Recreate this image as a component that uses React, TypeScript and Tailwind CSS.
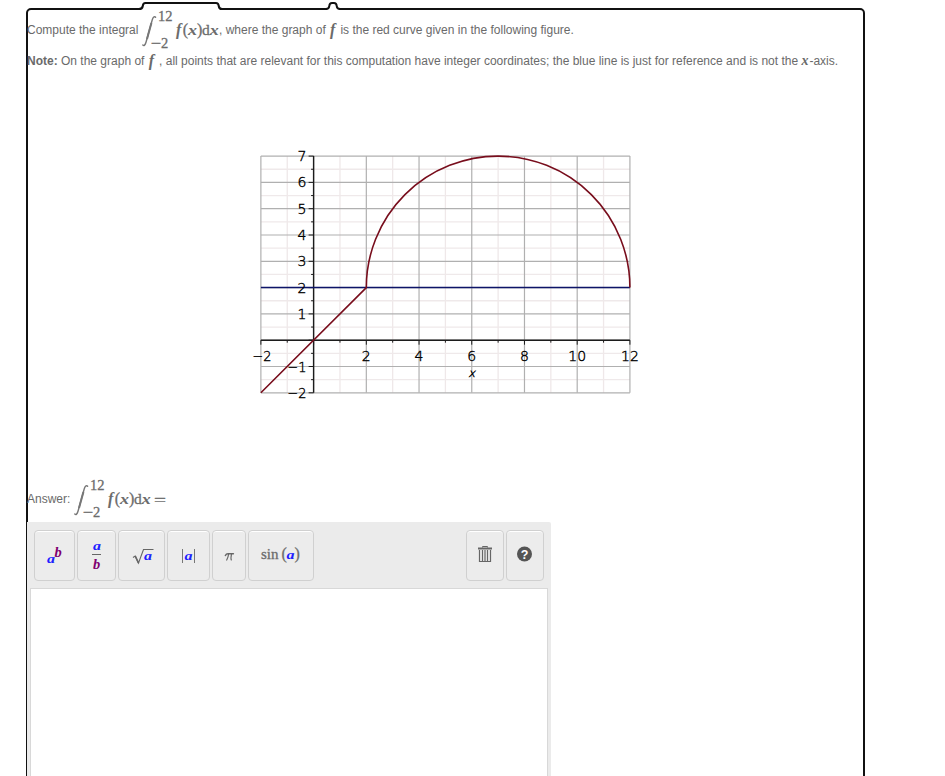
import type { ReactNode } from 'react'

const UNIT_X = 26.36
const UNIT_Y = 26.3

// the plot origin inside the svg
const px = (x: number) => 73.6 + x * UNIT_X
const py = (y: number) => 195.2 + y * -UNIT_Y

const xLabels = [-2, 2, 4, 6, 8, 10, 12]
const yLabels = [-2, -1, 1, 2, 3, 4, 5, 6, 7]

const range = (from: number, to: number, step: number) =>
  Array.from({ length: Math.round((to - from) / step) + 1 }, (_, i) => from + i * step)

const label = (n: number) => String(n).replace('-', '−')

function Plot() {
  return (
    <svg width="400" height="260" className="ml-[213px] block" fill="none">
      {range(-1, 11, 2).map((x) => (
        <path key={x} d={`M${px(x)} ${py(7)}V${py(-2)}`} stroke="#efe8e9" strokeWidth="1.3" />
      ))}
      {range(-1.5, 6.5, 1).map((y) => (
        <path key={y} d={`M${px(-2)} ${py(y)}H${px(12)}`} stroke="#efe9ea" strokeWidth="1.3" />
      ))}
      {range(-2, 12, 2).map((x) => (
        <path key={x} d={`M${px(x)} ${py(7)}V${py(-2)}`} stroke="#b0b0b0" strokeWidth="1.2" />
      ))}
      {range(-2, 7, 1).map((y) => (
        <path key={y} d={`M${px(-2)} ${py(y)}H${px(12)}`} stroke="#b0b0b0" strokeWidth="1.2" />
      ))}

      <path d={`M${px(-2)} ${py(0)}H${px(12)}M${px(0)} ${py(7)}V${py(-2)}`} stroke="#1c1c1c" strokeWidth="1.4" />
      {range(-2, 12, 1).map((x) => (
        <path key={x} d={`M${px(x)} ${py(0)}v${x % 2 === 0 ? 4.5 : 2.5}`} stroke="#1c1c1c" />
      ))}
      {range(-2, 7, 0.5).map((y) => (
        <path key={y} d={`M${px(0)} ${py(y)}h${y % 1 === 0 ? -5 : -2.5}`} stroke="#1c1c1c" />
      ))}

      <path d={`M${px(-2)} ${py(2)}H${px(12)}`} stroke="#0d1468" strokeWidth="1.5" />
      <path
        d={`M${px(-2)} ${py(-2)}L${px(2)} ${py(2)}A${5 * UNIT_X} ${5 * UNIT_Y} 0 0 1 ${px(12)} ${py(2)}`}
        stroke="#780d1c"
        strokeWidth="1.6"
      />

      <g fill="#000" stroke="#000" strokeWidth="0.4" fontFamily="DejaVu Sans Light, DejaVu Sans, sans-serif" fontWeight="200" fontSize="14" textAnchor="middle">
        {xLabels.map((x) => (
          <text
            key={x}
            x={px(x) + (x < 0 ? 1 : 0)}
            y="216"
            textLength={x < 0 ? 19 : undefined}
            lengthAdjust="spacingAndGlyphs"
          >
            {label(x)}
          </text>
        ))}
        <text x={px(6)} y="232" fontSize="11.5" fontStyle="italic">x</text>
      </g>
      <g fill="#000" stroke="#000" strokeWidth="0.4" fontFamily="DejaVu Sans Light, DejaVu Sans, sans-serif" fontWeight="200" fontSize="14" textAnchor="end">
        {yLabels.map((y) => (
          <text
            key={y}
            x="66.5"
            y={py(y) + 5}
            textLength={y < 0 ? 19 : undefined}
            lengthAdjust="spacingAndGlyphs"
          >
            {label(y)}
          </text>
        ))}
      </g>
    </svg>
  )
}

function Integral({ equals = false }: { equals?: boolean }) {
  return (
    <svg
      width={equals ? 100 : 80}
      height="44"
      className="block shrink-0"
      fill="#6c6c6c"
      fontFamily="Liberation Serif, serif"
      fontSize="16"
    >
      <path
        d="M16.6 9.3C15.4 7.8 14 9.3 13.2 12L7 34.3C6.2 37 5 38.2 3.8 37"
        fill="none"
        stroke="#777"
        strokeWidth="1.4"
        strokeLinecap="round"
      />
      <path d="M12.4 15L8 31" stroke="#777" strokeWidth="2" />
      <g stroke="#6c6c6c" strokeWidth="0.3">
        <text x="19" y="13" fontSize="14.5">12</text>
        <text x="11.5" y="40" fontSize="14.5" textLength="10.5" lengthAdjust="spacingAndGlyphs">−</text>
        <text x="22" y="40" fontSize="14.5">2</text>
        <text x="37" y="26.5" fontStyle="italic" fontWeight="bold" fontSize="16" strokeWidth="0">f</text>
        <text x="43.8" y="26.8">(</text>
        <text x="49" y="27" fontStyle="italic" fontWeight="bold" fontSize="14" textLength="9" lengthAdjust="spacingAndGlyphs" strokeWidth="0">x</text>
        <text x="58" y="26.8">)</text>
        <text x="63" y="27" fontSize="15.5">d</text>
        <text x="70.8" y="27" fontStyle="italic" fontWeight="bold" fontSize="14" textLength="9" lengthAdjust="spacingAndGlyphs" strokeWidth="0">x</text>
        {equals && <text x="83" y="27.5" fontSize="15" textLength="12" lengthAdjust="spacingAndGlyphs">=</text>}
      </g>
    </svg>
  )
}

function ToolButton({ className, children }: { className: string; children: ReactNode }) {
  return (
    <button
      className={`flex h-[51px] shrink-0 items-center justify-center rounded-[4px] border border-[#d0d0d0] bg-[#ececec] shadow-[inset_0_1px_0_#fff] ${className}`}
    >
      {children}
    </button>
  )
}

const A = ({ x, y }: { x: number; y: number }) => (
  <text x={x} y={y} fill="#2020ff" fontSize="13.5" textLength="8" lengthAdjust="spacingAndGlyphs">a</text>
)

function Toolbar() {
  return (
    <div className="flex gap-[2px] pt-2 pr-[7px] pl-[7px] text-[#666]">
      <ToolButton className="w-[41px]">
        <svg width="39" height="49" fontFamily="Liberation Serif, serif" fontWeight="bold" fontStyle="italic" fontSize="14.5">
          <A x={12} y={32} />
          <text x="19.5" y="26" fill="#800070">b</text>
        </svg>
      </ToolButton>
      <ToolButton className="w-[39px]">
        <svg width="37" height="49" fontFamily="Liberation Serif, serif" fontWeight="bold" fontStyle="italic" fontSize="14.5">
          <A x={15} y={18.5} />
          <path d="M14 23.5h9" stroke="#666" />
          <text x="15" y="38" fill="#800070">b</text>
        </svg>
      </ToolButton>
      <ToolButton className="w-[47px]">
        <svg width="45" height="49" fontFamily="Liberation Serif, serif" fontWeight="bold" fontStyle="italic" fontSize="14.5">
          <path d="M14 26.5L16.2 25L19.5 32L24.5 18.5H34.5" fill="none" stroke="#666" strokeWidth="1.1" />
          <path d="M16.2 25L19.5 32" stroke="#666" strokeWidth="1.7" />
          <A x={25} y={28.5} />
        </svg>
      </ToolButton>
      <ToolButton className="w-[43px]">
        <svg width="41" height="49" fontFamily="Liberation Serif, serif" fontWeight="bold" fontStyle="italic" fontSize="14.5">
          <path d="M14.5 18v14M26.5 18v14" stroke="#777" />
          <A x={16.5} y={28.5} />
        </svg>
      </ToolButton>
      <ToolButton className="w-[34px]">
        <svg width="32" height="49" fill="none" stroke="#666" strokeLinecap="round">
          <path d="M12.4 24.5Q13.2 22.8 15 22.8H20.4" strokeWidth="1.5" />
          <path d="M15.6 23Q15.2 26.5 13.7 29M18.5 23Q17.6 27.5 18.3 29" strokeWidth="1.2" />
        </svg>
      </ToolButton>
      <ToolButton className="w-[66px]">
        <svg width="64" height="49" fontFamily="Liberation Serif, serif" fontSize="14.5">
          <g fill="#6c6c6c" stroke="#6c6c6c" strokeWidth="0.3">
            <text x="12" y="28" textLength="17.5" lengthAdjust="spacingAndGlyphs">sin</text>
            <text x="32.5" y="28" fontSize="16">(</text>
            <text x="45.5" y="28" fontSize="16">)</text>
          </g>
          <g fontWeight="bold" fontStyle="italic">
            <A x={37.5} y={28} />
          </g>
        </svg>
      </ToolButton>
      <div className="grow" />
      <ToolButton className="w-[38px]">
        <svg width="36" height="49" fill="none" stroke="#666">
          <path d="M11 17.5h14" strokeWidth="2" />
          <path d="M15.5 16.5V15.5H20.5V16.5" />
          <path d="M12.5 19v11.5h11V19M15.5 19v11M18 19v11M20.5 19v11" strokeWidth="1.2" />
        </svg>
      </ToolButton>
      <ToolButton className="w-[38px]">
        <svg width="36" height="49">
          <circle cx="17.5" cy="23" r="7.5" fill="#555" />
          <text x="17.5" y="27.5" fill="#fff" fontFamily="Liberation Sans, sans-serif" fontSize="12.5" fontWeight="bold" textAnchor="middle">?</text>
        </svg>
      </ToolButton>
    </div>
  )
}

const F = () => (
  <span className="w-[8px] pl-px font-['Liberation_Serif',serif] text-[16px] leading-none font-bold italic">f</span>
)

export default function App() {
  return (
    <div className="h-[776px] w-[945px] overflow-hidden bg-white pt-2 pl-[26px] font-['Liberation_Sans',Arial,sans-serif] text-[12px] text-[#6a6a6a]">
      <div className="relative h-[800px] w-[839px] rounded-t-[5px] border-2 border-[#111]">
        {/* folder tabs on the top edge */}
        <svg width="220" height="10" className="absolute -top-[8px] left-[111px]" fill="none">
          <path d="M2 7H81M188 7H200" stroke="#fff" strokeWidth="2" />
          <path d="M0 7Q3.4 7 3.8 4Q4 1 6.5 1H77Q79.5 1 79.7 4Q80.1 7 83 7" stroke="#111" strokeWidth="2" />
          <path d="M187 7Q190 7 190.3 4Q190.5 1 193 1H195Q197.5 1 197.7 4Q198 7 201 7" stroke="#111" strokeWidth="2" />
        </svg>

        <div className="-ml-px">
          <div className="flex h-[40px] items-center whitespace-pre">
            <span className="w-[112px] shrink-0">Compute the integral</span>
            <Integral />
            <span>, where the graph of </span>
            <F />
            <span> is the red curve given in the following figure.</span>
          </div>
          <div className="flex h-[22px] items-center whitespace-pre">
            <b>Note:</b>
            <span> On the graph of </span>
            <F />
            <span> , all points that are relevant for this computation have integer coordinates; the blue line is just for reference and is not the </span>
            <span className="w-[8px] font-['Liberation_Serif',serif] text-[14px] leading-none font-bold italic">x</span>
            <span>-axis.</span>
          </div>

          <div className="pt-[73px]">
            <Plot />
          </div>

          <div className="mt-[72px] flex h-[44px] items-center whitespace-pre">
            <span className="w-[44px] shrink-0">Answer:</span>
            <Integral equals />
          </div>

          <div className="mt-[1px] h-[300px] w-[524px] rounded-tr-[2px] bg-[#ebebeb]">
            <Toolbar />
            <div className="mt-[7px] ml-[3px] h-[240px] w-[518px] border border-[#d8d8d8] bg-white" />
          </div>
        </div>
      </div>
    </div>
  )
}
